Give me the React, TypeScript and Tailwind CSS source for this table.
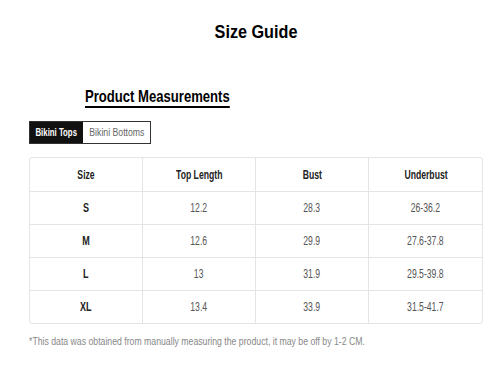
const rows = [
  { size: 'S', top: '12.2', bust: '28.3', under: '26-36.2' },
  { size: 'M', top: '12.6', bust: '29.9', under: '27.6-37.8' },
  { size: 'L', top: '13', bust: '31.9', under: '29.5-39.8' },
  { size: 'XL', top: '13.4', bust: '33.9', under: '31.5-41.7' },
];

const font = { fontFamily: '"Liberation Sans", Arial, sans-serif' };

export default function App() {
  return (
    <div className="min-h-[367px] bg-white pl-[29px] pr-[17px] pt-[23px]" style={font}>
      <h1 className="flex justify-center text-[18px] font-bold leading-none text-black">
        <span className="inline-block scale-x-[0.9]">Size Guide</span>
      </h1>

      <div className="mt-[47px] flex pl-[56px]">
        <h2 className="origin-left scale-x-[0.77] whitespace-nowrap border-b-2 border-black pb-px text-[17px] font-bold leading-none text-black">
          Product Measurements
        </h2>
      </div>

      <div className="mt-[13px] flex w-fit border border-[#333]">
        <button className="flex h-[21px] w-[53px] items-center justify-center bg-[#111] text-[11px] font-bold leading-none text-white">
          <span className="inline-block scale-x-[0.71] whitespace-nowrap">Bikini Tops</span>
        </button>
        <button className="flex h-[21px] w-[67px] items-center justify-center bg-white text-[11px] leading-none text-[#666]">
          <span className="inline-block scale-x-[0.79] whitespace-nowrap">Bikini Bottoms</span>
        </button>
      </div>

      <div className="mt-[13px] w-[454px] overflow-hidden rounded-[3px] border border-[#e4e4e4]">
        <div className="grid h-[33px] grid-cols-4 text-[12px] font-bold leading-none text-[#222]">
          {['Size', 'Top Length', 'Bust', 'Underbust'].map((h, i) => (
            <div key={h} className={`flex items-center justify-center ${i < 3 ? 'border-r border-[#e4e4e4]' : ''}`}>
              <span className="inline-block scale-x-[0.72] whitespace-nowrap">{h}</span>
            </div>
          ))}
        </div>
        {rows.map(r => (
          <div key={r.size} className="grid h-[33px] grid-cols-4 border-t border-[#e4e4e4] text-[12px] leading-none text-[#555]">
            <div className="flex items-center justify-center border-r border-[#e4e4e4] font-bold text-[#222]">
              <span className="inline-block scale-x-[0.75]">{r.size}</span>
            </div>
            <div className="flex items-center justify-center border-r border-[#e4e4e4]">
              <span className="inline-block scale-x-[0.72]">{r.top}</span>
            </div>
            <div className="flex items-center justify-center border-r border-[#e4e4e4]">
              <span className="inline-block scale-x-[0.72]">{r.bust}</span>
            </div>
            <div className="flex items-center justify-center">
              <span className="inline-block scale-x-[0.72] whitespace-nowrap">{r.under}</span>
            </div>
          </div>
        ))}
      </div>

      <div className="mt-[13px] flex text-[10px] leading-none text-[#888]">
        <p className="origin-left scale-x-[0.87] whitespace-nowrap">
          *This data was obtained from manually measuring the product, it may be off by 1-2 CM.
        </p>
      </div>
    </div>
  );
}
